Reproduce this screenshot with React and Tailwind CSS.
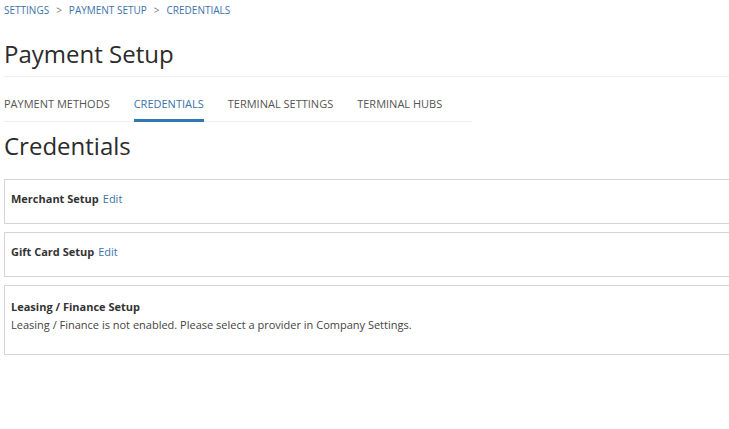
import React from "react";

const tabs = ["PAYMENT METHODS", "CREDENTIALS", "TERMINAL SETTINGS", "TERMINAL HUBS"];

const Card = ({ title, edit, children, tall }) => (
  <div className={`w-[760px] border border-[#d4d4d4] px-[6px] ${tall ? "pt-[13px] pb-[21px]" : "pt-[11px] pb-[16px]"}`}>
    <div className="flex items-baseline gap-[4px] text-[11px] leading-[16px]">
      <span className="font-bold text-[#333]">{title}</span>
      {edit && <a className="text-[#3d72a8]">Edit</a>}
    </div>
    {children}
  </div>
);

export default function App() {
  return (
    <div className="h-[429px] w-[729px] overflow-hidden bg-white pl-[4px] font-['Open_Sans',sans-serif] text-[#333]">
      <nav className="flex items-center gap-[7px] pt-[3px] text-[10px] leading-[14px] text-[#3d72a8]">
        <span>SETTINGS</span>
        <span className="text-[#777]">&gt;</span>
        <span>PAYMENT SETUP</span>
        <span className="text-[#777]">&gt;</span>
        <span>CREDENTIALS</span>
      </nav>

      <h1 className="mt-[21px] text-[24px] leading-[32px] text-[#2b2b2b]">Payment Setup</h1>
      <div className="mt-[6px] w-[760px] border-b border-[#eeeeee]" />

      <div className="mt-[19px] flex w-[468px] gap-[24px] border-b border-[#eeeeee] text-[11px] leading-[16px]">
        {tabs.map((t) => (
          <div
            key={t}
            className={t === "CREDENTIALS" ? "-mb-[1px] border-b-[3px] border-[#3178b0] pb-[7px] text-[#3d72a8]" : "pb-[9px] text-[#555]"}
          >
            {t}
          </div>
        ))}
      </div>

      <h2 className="mt-[8px] text-[24px] leading-[32px] text-[#2b2b2b]">Credentials</h2>

      <div className="mt-[17px] flex flex-col gap-[8px]">
        <Card title="Merchant Setup" edit />
        <Card title="Gift Card Setup" edit />
        <Card title="Leasing / Finance Setup" tall>
          <p className="mt-[2px] text-[11px] leading-[16px] text-[#444]">
            Leasing / Finance is not enabled. Please select a provider in Company Settings.
          </p>
        </Card>
      </div>
    </div>
  );
}
